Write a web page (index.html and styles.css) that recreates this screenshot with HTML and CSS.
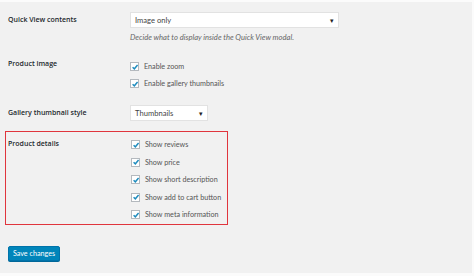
FILE: index.html
```html
<!DOCTYPE html>
<html lang="en">
<head>
  <meta charset="UTF-8">
  <title>Quick View settings</title>
  <link rel="stylesheet" href="styles.css">
</head>
<body>
  <div class="panel">
    <!-- Quick View contents -->
    <div class="row row-contents">
      <div class="label">Quick View contents</div>
      <div class="field">
        <div class="select select-wide"><span>Image only</span><span class="arrow">&#9662;</span></div>
        <p class="description">Decide what to display inside the Quick View modal.</p>
      </div>
    </div>

    <!-- Product image -->
    <div class="row row-image">
      <div class="label">Product image</div>
      <div class="field">
        <label class="check"><span class="box"><svg viewBox="0 0 10 10"><path d="M2 5.2 L4.2 7.3 L8.2 2.6" /></svg></span>Enable zoom</label>
        <label class="check"><span class="box"><svg viewBox="0 0 10 10"><path d="M2 5.2 L4.2 7.3 L8.2 2.6" /></svg></span>Enable gallery thumbnails</label>
      </div>
    </div>

    <!-- Gallery thumbnail style -->
    <div class="row row-style">
      <div class="label">Gallery thumbnail style</div>
      <div class="field">
        <div class="select select-narrow"><span>Thumbnails</span><span class="arrow">&#9662;</span></div>
      </div>
    </div>

    <!-- Product details (highlighted) -->
    <div class="row row-details">
      <div class="label">Product details</div>
      <div class="field">
        <label class="check"><span class="box"><svg viewBox="0 0 10 10"><path d="M2 5.2 L4.2 7.3 L8.2 2.6" /></svg></span>Show reviews</label>
        <label class="check"><span class="box"><svg viewBox="0 0 10 10"><path d="M2 5.2 L4.2 7.3 L8.2 2.6" /></svg></span>Show price</label>
        <label class="check"><span class="box"><svg viewBox="0 0 10 10"><path d="M2 5.2 L4.2 7.3 L8.2 2.6" /></svg></span>Show short description</label>
        <label class="check"><span class="box"><svg viewBox="0 0 10 10"><path d="M2 5.2 L4.2 7.3 L8.2 2.6" /></svg></span>Show add to cart button</label>
        <label class="check"><span class="box"><svg viewBox="0 0 10 10"><path d="M2 5.2 L4.2 7.3 L8.2 2.6" /></svg></span>Show meta information</label>
      </div>
    </div>

    <button class="save">Save changes</button>
  </div>
</body>
</html>
```

FILE: styles.css
```css
body {
  margin: 0;
  background: #fbfbfb;
  font-family: Lato, "Open Sans", sans-serif;
  font-size: 7.6px;
  color: #23282d;
}
.panel {
  width: 472px;
  height: 271px;
  margin-top: 2px;
  padding: 10px 0 0 8px;
  box-sizing: border-box;
  background: #f1f1f1;
}
.row {
  display: flex;
}
.label {
  width: 122px;
  flex-shrink: 0;
  font-family: "Open Sans", sans-serif;
  font-size: 7px;
  font-weight: 600;
  line-height: 16px;
  white-space: nowrap;
}
.field {
  display: flex;
  flex-direction: column;
  flex: 1;
  white-space: nowrap;
}
.select {
  height: 16px;
  box-sizing: border-box;
  background: #fff;
  border: 1px solid #e2e2e2;
  display: flex;
  align-items: center;
  justify-content: space-between;
  padding: 0 4px 0 4px;
  color: #444;
}
.select-wide {
  width: 209px;
}
.select-narrow {
  width: 78px;
}
.arrow {
  font-size: 7px;
  color: #222;
}
.description {
  margin: 4px 0 0;
  font-style: italic;
  color: #666;
  line-height: 10px;
}
.row-image {
  margin-top: 16px;
}
.row-image .label {
  line-height: 10px;
  padding-top: 1px;
}
.row-style {
  margin-top: 13px;
}
.row-details {
  margin-top: 10px;
  margin-left: -3px;
  width: 223px;
  height: 94px;
  box-sizing: border-box;
  border: 1px solid #e0353d;
  padding: 4px 0 0 2px;
}
.row-details .label {
  width: 123px;
}
.check {
  display: flex;
  align-items: center;
  height: 17.5px;
  font-size: 7.2px;
  color: #555;
}
.row-image .check {
  height: 17px;
}
.box {
  width: 9px;
  height: 9px;
  box-sizing: border-box;
  background: #fff;
  border: 1px solid #b4b9be;
  margin-right: 5px;
  display: flex;
  flex-shrink: 0;
}
.box svg {
  width: 8px;
  height: 8px;
  margin: -0.5px;
}
.box path {
  fill: none;
  stroke: #1e8cbe;
  stroke-width: 1.8;
}
.save {
  display: block;
  margin-top: 21px;
  height: 15px;
  width: 52px;
  padding: 0;
  font-family: inherit;
  font-size: 7.2px;
  color: #fff;
  background: #0085ba;
  border: 1px solid #0073aa;
  border-radius: 2px;
  box-shadow: 0 1px 0 #006799;
}
```
